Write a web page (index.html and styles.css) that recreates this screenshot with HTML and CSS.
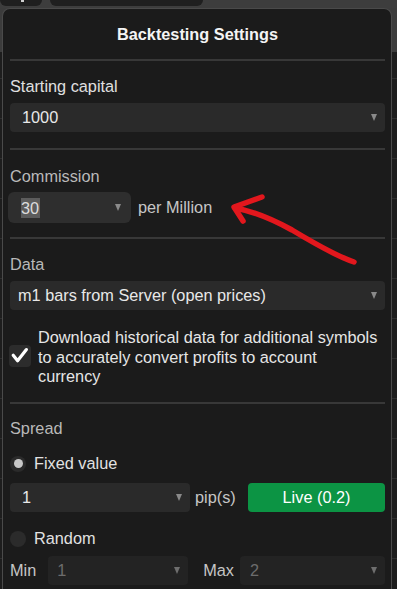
FILE: index.html
```html
<!DOCTYPE html>
<html lang="en">
<head>
<meta charset="utf-8">
<title>Backtesting Settings</title>
<link rel="stylesheet" href="styles.css">
</head>
<body>
<div class="topbar">
  <div class="tab tab-a"><span class="tab-dot"></span></div>
  <div class="tab tab-b"></div>
</div>
<div class="panel">
  <h1 class="title">Backtesting Settings</h1>
  <hr class="divider">

  <section class="section s-capital">
    <div class="label label-bright">Starting capital</div>
    <div class="select sel-capital"><span class="value">1000</span><span class="caret"></span></div>
  </section>
  <hr class="divider d2">

  <section class="section s-commission">
    <div class="label">Commission</div>
    <div class="row-commission">
      <div class="select sel-commission"><span class="value"><span class="selected-text">30</span></span><span class="caret"></span></div>
      <span class="unit">per Million</span>
    </div>
  </section>
  <hr class="divider d3">

  <section class="section s-data">
    <div class="label">Data</div>
    <div class="select sel-data"><span class="value">m1 bars from Server (open prices)</span><span class="caret"></span></div>
    <label class="check-row">
      <span class="checkbox">
        <svg width="22" height="22" viewBox="0 0 22 22"><path d="M4.2 10.2 L8.6 15.8 L17.4 4.6" fill="none" stroke="#ffffff" stroke-width="3.2" stroke-linecap="round" stroke-linejoin="round"/></svg>
      </span>
      <span class="check-text">Download historical data for additional symbols to accurately convert profits to account currency</span>
    </label>
  </section>
  <hr class="divider d4">

  <section class="section s-spread">
    <div class="label">Spread</div>
    <div class="radio-row r-fixed"><span class="radio checked"></span><span class="radio-text">Fixed value</span></div>
    <div class="row-fixed">
      <div class="select sel-fixed"><span class="value">1</span><span class="caret"></span></div>
      <span class="unit pips">pip(s)</span>
      <button class="live-btn">Live (0.2)</button>
    </div>
    <div class="radio-row r-random"><span class="radio"></span><span class="radio-text">Random</span></div>
    <div class="row-minmax">
      <span class="mm-label">Min</span>
      <div class="select disabled sel-min"><span class="value">1</span><span class="caret"></span></div>
      <span class="mm-label mm-max">Max</span>
      <div class="select disabled sel-max"><span class="value">2</span><span class="caret"></span></div>
    </div>
  </section>
</div>

<svg class="annotation" width="397" height="589" viewBox="0 0 397 589">
  <path d="M354 262 C 336 256, 312 242, 292 230 C 272 219, 252 211, 235 208" fill="none" stroke="#e2171d" stroke-width="5.5" stroke-linecap="round" stroke-linejoin="round"/>
  <path d="M262 197 L 234 207 L 243 221" fill="none" stroke="#e2171d" stroke-width="5.5" stroke-linecap="round" stroke-linejoin="round"/>
</svg>
</body>
</html>
```

FILE: styles.css
```css
* { box-sizing: border-box; }

html, body {
  margin: 0;
  padding: 0;
}

body {
  width: 397px;
  height: 589px;
  overflow: hidden;
  position: relative;
  font-family: "Liberation Sans", Arial, sans-serif;
  font-size: 16.3px;
  color: #e2e2e2;
  background:
    linear-gradient(#3c3c3c, #3c3c3c) top / 100% 52px no-repeat,
    repeating-linear-gradient(to bottom, #1d1d1d 0 38px, #2e2e2e 38px 39px, #1d1d1d 39px 40px);
  background-color: #1d1d1d;
}

.topbar {
  height: 8px;
  display: flex;
  gap: 8px;
  background: #3d3d3d;
}

.tab {
  height: 6px;
  background: #1f1f1f;
  border-radius: 0 0 6px 6px;
  position: relative;
}
.tab-a { width: 42px; }
.tab-b { width: 153px; }
.tab-dot {
  position: absolute;
  left: 21px;
  top: 0;
  width: 3px;
  height: 2px;
  background: #cfcfcf;
}

.panel {
  margin-left: 2px;
  width: 390px;
  height: 581px;
  background: #1b1b1b;
  border: 1px solid #4a4a4a;
  border-bottom: none;
  border-radius: 8px 8px 0 0;
  padding: 0 6px 0 7px;
}

.title {
  margin: 0;
  height: 50px;
  line-height: 50px;
  font-size: 16.3px;
  font-weight: bold;
  text-align: center;
  color: #f4f4f4;
}

.divider {
  margin: 0;
  border: none;
  height: 2px;
  background: #383838;
}
.d2 { margin-top: 16px; }
.d3 { margin-top: 14px; }
.d4 { margin-top: 15px; }

.label {
  line-height: 20px;
  color: #b9b9b9;
}
.label-bright { color: #e0e0e0; }

.s-capital { padding-top: 15px; }
.s-commission { padding-top: 16px; }
.s-data { padding-top: 15px; }
.s-spread { padding-top: 14px; }

.select {
  height: 29px;
  background: #2a2a2a;
  border-radius: 4px;
  display: flex;
  align-items: center;
  justify-content: space-between;
  padding: 0 8px 0 12px;
  color: #e8e8e8;
}
.select .value { white-space: nowrap; }

.caret {
  width: 0;
  height: 0;
  border-left: 3.5px solid transparent;
  border-right: 3.5px solid transparent;
  border-top: 7px solid #8a8a8a;
}

.sel-capital { margin-top: 7px; }

.row-commission {
  margin-top: 6px;
  display: flex;
  align-items: center;
}
.sel-commission {
  margin-left: -2px;
  width: 123px;
  height: 31px;
  border-radius: 6px;
  background: #2e2e2e;
  padding: 0 10px 0 13px;
}
.selected-text {
  background: #5c5c5c;
  color: #dcdcdc;
  display: inline-block;
  line-height: 20px;
  padding: 0 1px 0 0;
}
.unit {
  color: #c6c6c6;
}
.row-commission .unit { margin-left: 7px; }

.sel-data {
  margin-top: 7px;
  padding-left: 8px;
}

.check-row {
  margin-top: 18px;
  display: flex;
  align-items: center;
  gap: 7px;
}
.checkbox {
  flex: none;
  width: 22px;
  height: 22px;
  margin-left: -1px;
  margin-top: -3px;
  background: #2c2c2c;
  border-radius: 4px;
  display: flex;
}
.check-text {
  width: 342px;
  line-height: 19.5px;
  color: #e6e6e6;
}

.radio-row {
  display: flex;
  align-items: center;
  height: 20px;
  gap: 8px;
}
.r-fixed { margin-top: 16px; }
.r-random { margin-top: 17px; }
.radio {
  width: 16px;
  height: 16px;
  border-radius: 50%;
  background: #2b2b2b;
  display: flex;
  align-items: center;
  justify-content: center;
}
.radio.checked::after {
  content: "";
  width: 9px;
  height: 9px;
  border-radius: 50%;
  background: #c9c9c9;
}
.radio-text { color: #e2e2e2; }

.row-fixed {
  margin-top: 9px;
  display: grid;
  grid-template-columns: 180px 1fr 137px;
  align-items: center;
}
.pips { padding-left: 5px; }
.live-btn {
  height: 29px;
  border: none;
  border-radius: 4px;
  background: #0c9444;
  color: #ffffff;
  font-family: inherit;
  font-size: 16.3px;
  padding: 0;
}

.row-minmax {
  margin-top: 7px;
  display: flex;
  align-items: center;
}
.mm-label { color: #c6c6c6; }
.sel-min {
  margin-left: 12px;
  width: 140px;
  padding-left: 9px;
}
.mm-max { margin-left: 15px; }
.sel-max {
  margin-left: 6px;
  flex: 1;
  padding-left: 10px;
}
.select.disabled {
  background: #232323;
  color: #6c6c6c;
}
.select.disabled .caret { border-top-color: #6e6e6e; }

.annotation {
  position: absolute;
  left: 0;
  top: 0;
  pointer-events: none;
}
```
